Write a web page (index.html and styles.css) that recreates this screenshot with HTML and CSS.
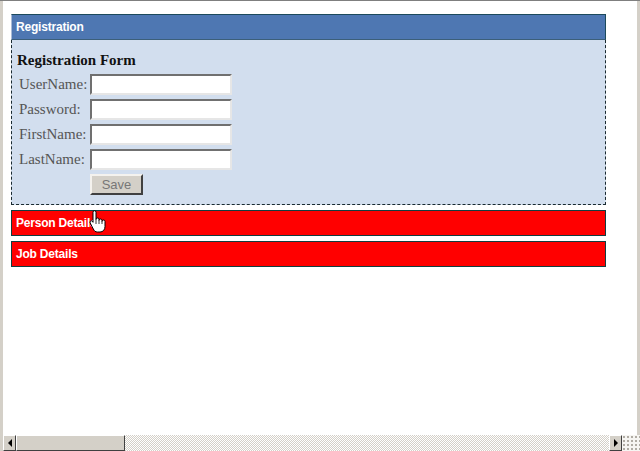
FILE: index.html
```html
<!DOCTYPE html>
<html>
<head>
<meta charset="utf-8">
<link rel="stylesheet" href="styles.css">
</head>
<body>
<div class="window">
  <div class="main">
    <div class="accordion">
      <div class="pane">
        <div class="head head-blue">Registration</div>
        <div class="pane-body">
          <div class="form-title">Registration Form</div>
          <div class="form">
            <label class="lbl">UserName:</label><input class="field" type="text">
            <label class="lbl">Password:</label><input class="field" type="password">
            <label class="lbl">FirstName:</label><input class="field" type="text">
            <label class="lbl">LastName:</label><input class="field" type="text">
            <span></span><button class="btn">Save</button>
          </div>
        </div>
      </div>
      <div class="head head-red cursor-host">Person Details
        <svg class="cursor" width="18" height="23" viewBox="0 0 18 23">
          <path d="M5 2.2a1.5 1.5 0 0 1 3 0V9.5a1.5 1.5 0 0 1 3 0v1a1.5 1.5 0 0 1 3 0v1a1.5 1.5 0 0 1 3 0V16.5c0 3.2-2 5.5-5 5.5H9.5c-2 0-3.200-1-4.2-3L2.2 13a1.4 1.4 0 0 1 2.4-1.5L5 12.300Z" fill="#fff" stroke="#000" stroke-width="1" stroke-linejoin="round"/>
          <path d="M8 9.5V14M11 10.5V14M14 11.5V14" stroke="#000" stroke-width="0.8" fill="none"/>
        </svg>
      </div>
      <div class="head head-red">Job Details</div>
    </div>
  </div>
  <div class="hscroll">
    <div class="sb-btn"><span class="tri-left"></span></div>
    <div class="sb-thumb"></div>
    <div class="sb-track"></div>
    <div class="sb-btn"><span class="tri-right"></span></div>
    <div class="sb-grip"></div>
  </div>
</div>
</body>
</html>
```
FILE: styles.css
```css
html, body {
  margin: 0;
  padding: 0;
  background: #fff;
}
body {
  width: 640px;
  height: 451px;
  overflow: hidden;
}
.window {
  width: 640px;
  height: 451px;
  box-sizing: border-box;
  border-top: 1px solid #7f7f7f;
  display: flex;
  flex-direction: column;
}
.main {
  flex: 1;
  border-left: 3px solid #d4d0c8;
  border-right: 3px solid #d4d0c8;
  padding: 13px 0 0 8px;
  background: #fff;
}
.accordion {
  width: 595px;
  display: flex;
  flex-direction: column;
  gap: 5px;
}
.head {
  height: 26px;
  box-sizing: border-box;
  padding-left: 4px;
  font-family: "Liberation Sans", Arial, sans-serif;
  font-weight: bold;
  font-size: 12px;
  color: #fff;
  display: flex;
  align-items: center;
  letter-spacing: -0.2px;
}
.head-blue {
  background: #4e77b2;
  border-top: 1px solid #1c4a5c;
  border-right: 1px solid #1c4a5c;
  border-left: 1px solid #a9bbd6;
  border-bottom: 1px solid #3c5f7a;
}
.head-red {
  background: #ff0000;
  border: 1px solid #123d40;
}
.cursor-host {
  position: relative;
}
.cursor {
  position: absolute;
  left: 76px;
  top: -1px;
}
.pane-body {
  background: #d2deee;
  border-left: 1px dashed #1a2a30;
  border-right: 1px dashed #1a2a30;
  border-bottom: 1px dashed #1a2a30;
  padding: 12px 0 9px 5px;
  height: 165px;
  box-sizing: border-box;
}
.form-title {
  font-family: "Liberation Serif", "Times New Roman", serif;
  font-weight: bold;
  font-size: 15px;
  line-height: 17px;
  color: #111;
  margin-bottom: 5px;
}
.form {
  display: grid;
  grid-template-columns: 73px 142px;
  grid-auto-rows: 21px;
  row-gap: 4px;
  align-items: center;
}
.lbl {
  font-family: "Liberation Serif", "Times New Roman", serif;
  font-size: 15px;
  color: #555;
  padding-left: 2px;
  white-space: nowrap;
}
.field {
  width: 142px;
  height: 21px;
  box-sizing: border-box;
  margin: 0;
  padding: 1px 2px;
  background: #fff;
  border: 2px solid;
  border-color: #707070 #e6e6e6 #e6e6e6 #707070;
  outline: none;
}
.btn {
  width: 53px;
  height: 21px;
  box-sizing: border-box;
  margin: 0;
  padding: 0;
  background: #d4d0c8;
  border: 2px solid;
  border-color: #f4f2ee #404040 #404040 #f4f2ee;
  font-family: "Liberation Sans", Arial, sans-serif;
  font-size: 13px;
  color: #777;
}
.hscroll {
  height: 16px;
  display: flex;
  background: #d4d0c8;
  padding-left: 3px;
}
.sb-btn {
  width: 13px;
  height: 16px;
  box-sizing: border-box;
  background: #d4d0c8;
  border: 1px solid;
  border-color: #fff #404040 #404040 #fff;
  display: flex;
  align-items: center;
  justify-content: center;
}
.tri-left {
  width: 0;
  height: 0;
  border-top: 4px solid transparent;
  border-bottom: 4px solid transparent;
  border-right: 4px solid #000;
}
.tri-right {
  width: 0;
  height: 0;
  border-top: 4px solid transparent;
  border-bottom: 4px solid transparent;
  border-left: 4px solid #000;
}
.sb-thumb {
  width: 109px;
  height: 16px;
  box-sizing: border-box;
  background: #d4d0c8;
  border: 1px solid;
  border-color: #fff #404040 #404040 #fff;
}
.sb-track {
  flex: 1;
  background-color: #fff;
  background-image: repeating-conic-gradient(#d4d0c8 0 25%, #fff 0 50%);
  background-size: 2px 2px;
}
.sb-grip {
  width: 18px;
  height: 16px;
  background-color: #f6f5f2;
  background-image: radial-gradient(circle, #b0aca4 0.8px, transparent 1px);
  background-size: 4px 4px;
}
```
